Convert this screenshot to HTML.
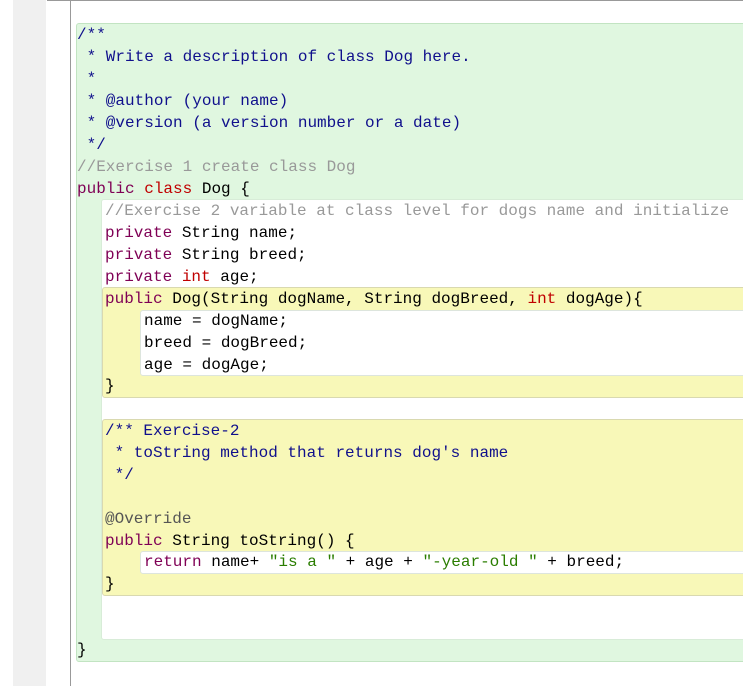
<!DOCTYPE html>
<html><head><meta charset="utf-8"><style>
body{margin:0;width:743px;height:686px;background:#fff;position:relative;overflow:hidden;font-family:"Liberation Mono",monospace;font-size:16px}
.a{position:absolute}
.l{position:absolute;height:22px;line-height:22px;white-space:pre;color:#000}
.k{color:#7f0055}.r{color:#c00000}.d{color:#10108c}.c{color:#999}.s{color:#2a7d00}
</style></head><body>
<div class="a" style="left:13px;top:0;width:33px;height:686px;background:#f0f0f0"></div>
<div class="a" style="left:47px;top:0;width:696px;height:1px;background:#999"></div>
<div class="a" style="left:70px;top:0;width:1px;height:686px;background:#999"></div>
<div class="a" style="left:76px;top:23px;width:680px;height:637px;background:#e0f7e0;border:1px solid #c2e4c2;border-radius:3px"></div>
<div class="a" style="left:101px;top:199px;width:660px;height:439px;background:#fff;border:1px solid #d8ecd8;border-radius:3px"></div>
<div class="a" style="left:102px;top:287px;width:660px;height:109px;background:#f8f8b8;border:1px solid #d9d9b0;border-radius:3px"></div>
<div class="a" style="left:140px;top:310px;width:620px;height:64px;background:#fff;border:1px solid #dde5dd;border-radius:3px"></div>
<div class="a" style="left:102px;top:419px;width:660px;height:175px;background:#f8f8b8;border:1px solid #d9d9b0;border-radius:3px"></div>
<div class="a" style="left:140px;top:551px;width:620px;height:21px;background:#fff;border:1px solid #dde5dd;border-radius:3px"></div>

<div class="l d" style="left:77px;top:24px">/**</div>
<div class="l d" style="left:77px;top:46px"> * Write a description of class Dog here.</div>
<div class="l d" style="left:77px;top:68px"> *</div>
<div class="l d" style="left:77px;top:90px"> * @author (your name)</div>
<div class="l d" style="left:77px;top:112px"> * @version (a version number or a date)</div>
<div class="l d" style="left:77px;top:134px"> */</div>
<div class="l c" style="left:77px;top:156px">//Exercise 1 create class Dog</div>
<div class="l" style="left:77px;top:178px"><span class="k">public</span> <span class="r">class</span> Dog {</div>
<div class="l c" style="left:105px;top:200px">//Exercise 2 variable at class level for dogs name and initialize</div>
<div class="l" style="left:105px;top:222px"><span class="k">private</span> String name;</div>
<div class="l" style="left:105px;top:244px"><span class="k">private</span> String breed;</div>
<div class="l" style="left:105px;top:266px"><span class="k">private</span> <span class="r">int</span> age;</div>
<div class="l" style="left:105px;top:288px"><span class="k">public</span> Dog(String dogName, String dogBreed, <span class="r">int</span> dogAge){</div>
<div class="l" style="left:144px;top:310px">name = dogName;</div>
<div class="l" style="left:144px;top:332px">breed = dogBreed;</div>
<div class="l" style="left:144px;top:354px">age = dogAge;</div>
<div class="l" style="left:105px;top:375px">}</div>
<div class="l d" style="left:105px;top:420px">/** Exercise-2</div>
<div class="l d" style="left:105px;top:442px"> * toString method that returns dog's name</div>
<div class="l d" style="left:105px;top:464px"> */</div>
<div class="l" style="left:105px;top:508px;color:#555">@Override</div>
<div class="l" style="left:105px;top:530px"><span class="k">public</span> String toString() {</div>
<div class="l" style="left:144px;top:551px"><span class="k">return</span> name+ <span class="s">"is a "</span> + age + <span class="s">"-year-old "</span> + breed;</div>
<div class="l" style="left:105px;top:573px">}</div>
<div class="l" style="left:77px;top:639px">}</div>
</body></html>
